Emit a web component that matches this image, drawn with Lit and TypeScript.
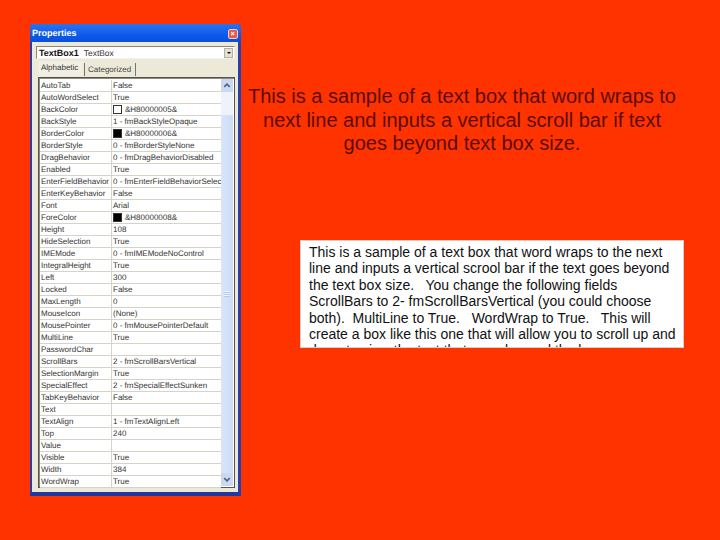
import { LitElement, html, css, svg } from "lit";
import { customElement } from "lit/decorators.js";

type Row = [string, string, string?];
const rows: Row[] = [
  ["AutoTab", "False"],
  ["AutoWordSelect", "True"],
  ["BackColor", "&H80000005&", "#fff"],
  ["BackStyle", "1 - fmBackStyleOpaque"],
  ["BorderColor", "&H80000006&", "#000"],
  ["BorderStyle", "0 - fmBorderStyleNone"],
  ["DragBehavior", "0 - fmDragBehaviorDisabled"],
  ["Enabled", "True"],
  ["EnterFieldBehavior", "0 - fmEnterFieldBehaviorSelec"],
  ["EnterKeyBehavior", "False"],
  ["Font", "Arial"],
  ["ForeColor", "&H80000008&", "#000"],
  ["Height", "108"],
  ["HideSelection", "True"],
  ["IMEMode", "0 - fmIMEModeNoControl"],
  ["IntegralHeight", "True"],
  ["Left", "300"],
  ["Locked", "False"],
  ["MaxLength", "0"],
  ["MouseIcon", "(None)"],
  ["MousePointer", "0 - fmMousePointerDefault"],
  ["MultiLine", "True"],
  ["PasswordChar", ""],
  ["ScrollBars", "2 - fmScrollBarsVertical"],
  ["SelectionMargin", "True"],
  ["SpecialEffect", "2 - fmSpecialEffectSunken"],
  ["TabKeyBehavior", "False"],
  ["Text", ""],
  ["TextAlign", "1 - fmTextAlignLeft"],
  ["Top", "240"],
  ["Value", ""],
  ["Visible", "True"],
  ["Width", "384"],
  ["WordWrap", "True"],
];

@customElement("app-root")
export class AppRoot extends LitElement {
  static styles = css`
    :host {
      display: block;
      width: 720px;
      height: 540px;
      overflow: hidden;
      background: #ff3300;
      font-family: "Liberation Sans", Arial, sans-serif;
    }
    .slide {
      display: flex;
      align-items: flex-start;
      padding: 24px 36px 0 30px;
      gap: 1px;
    }
    .win {
      flex: none;
      width: 211px;
      height: 472px;
      box-sizing: border-box;
      background: #ece9d8;
      border-left: 2px solid #2440ae;
      border-right: 3px solid #2440ae;
      border-bottom: 4px solid #23389f;
      border-radius: 3px 3px 0 0;
      display: flex;
      flex-direction: column;
      font-size: 8px;
      text-rendering: geometricPrecision;
      color: #333;
    }
    .title {
      height: 18px;
      flex: none;
      margin: 0 -3px 0 -2px;
      background: linear-gradient(#2a72f0, #0a58e8 70%, #0b4fd6);
      border-radius: 3px 3px 0 0;
      display: flex;
      align-items: center;
      justify-content: space-between;
      padding: 0 3px 0 2px;
      color: #fff;
      font-weight: 700;
      font-size: 9px;
    }
    .close {
      width: 10px;
      height: 10px;
      border-radius: 2px;
      background: #e0604a;
      border: 1px solid #f3c8bd;
      box-sizing: border-box;
      display: block;
      margin-top: 1px;
    }
    .combo {
      margin: 4px 4px 0;
      height: 11px;
      flex: none;
      background: #fff;
      border: 1px solid #8a8778;
      border-bottom-color: #f4f2e8;
      border-right-color: #f4f2e8;
      display: flex;
      align-items: center;
      padding-left: 2px;
      gap: 5px;
      width: 195px;
      color: #333;
    }
    .combo b { color: #111; font-size: 9px; }
    .combo span { flex: 1; font-size: 8.4px; }
    .drop {
      width: 9px;
      height: 10px;
      margin-right: 1px;
      background: #e4e1d2;
      border: 1px solid #b5b2a2;
      box-sizing: border-box;
      display: flex;
      align-items: center;
      justify-content: center;
    }
    .drop i {
      width: 0;
      height: 0;
      border: 2px solid transparent;
      border-top: 2px solid #000;
      border-bottom: none;
    }
    .tabs {
      display: flex;
      margin: 2px 5px 0 7px;
      height: 15px;
      flex: none;
      align-items: flex-end;
    }
    .tab {
      display: flex;
      align-items: center;
      box-sizing: border-box;
    }
    .tab.active {
      height: 15px;
      padding: 0 0 3px 2px;
      background: #f1efe3;
      width: 44px;
    }
    .tab.other {
      border-right: 1px solid #77756a;
      border-left: 1px solid #77756a;
      margin-left: 1px;
      height: 13px;
      width: 52px;
      padding: 0 0 0 3px;
      color: #444;
    }
    .grid {
      margin: 1px 0 0 6px;
      width: 197px;
      flex: none;
      height: 411px;
      box-sizing: border-box;
      background: #fff;
      border: 1px solid #55534a;
      box-shadow: inset 1px 1px 0 #8c8a7e;
      display: flex;
      padding: 2px 1px 0 1px;
    }
    .rows {
      width: 181px;
      flex: none;
    }
    .row {
      display: grid;
      grid-template-columns: 71px 1fr;
      height: 12px;
      box-sizing: border-box;
      border-bottom: 1px solid #d6d4c8;
      line-height: 11px;
      white-space: nowrap;
    }
    .row > div { overflow: hidden; padding-left: 1px; }
    .row > div + div {
      border-left: 1px solid #d6d4c8;
      padding-left: 1px;
      display: flex;
      align-items: center;
      gap: 3px;
    }
    .swatch {
      width: 9px;
      height: 9px;
      flex: none;
      box-sizing: border-box;
      border: 1px solid #333;
    }
    .sb {
      flex: 1;
      display: flex;
      flex-direction: column;
      background: #eef3fb;
      margin-top: -1px;
      height: 407px;
    }
    .sbtn {
      height: 13px;
      flex: none;
      background: #cad8f4;
      display: block;
      width: 100%;
    }
    .track { height: 23px; flex: none; }
    .thumb {
      flex: 1;
      background: linear-gradient(90deg, #d8e5fb, #cddcf8);
      display: flex;
      align-items: center;
      justify-content: center;
    }
    .grip {
      width: 6px;
      height: 6px;
      background: repeating-linear-gradient(#eef3fd 0 1px, #b4c8ec 1px 2px);
    }
    .main {
      flex: 1;
      display: flex;
      flex-direction: column;
      align-items: flex-start;
    }
    h1 {
      margin: 61px 0 0;
      width: 440px;
      text-align: center;
      font-weight: 400;
      font-size: 20px;
      line-height: 23.7px;
      color: #5c0c02;
    }
    .box {
      margin: 83.9px 0 0 58px;
      width: 384px;
      height: 108px;
      flex: none;
      box-sizing: border-box;
      background: #fff;
      border: 1px solid #d8cfc8;
      overflow: hidden;
      padding: 3px 6px 0 8px;
      font-size: 14px;
      line-height: 16.4px;
      color: #111;
      white-space: pre-wrap;
    }
  `;

  private arrow(d: string) {
    return svg`<svg class="sbtn" viewBox="0 0 13 13"><path d=${d} fill="none" stroke="#4d6185" stroke-width="1.6"/></svg>`;
  }

  render() {
    return html`<div class="slide">
      <section class="win">
        <div class="title">
          <span>Properties</span>
          <svg class="close" viewBox="0 0 10 10"><path d="M2.5 2.5l4 4M6.5 2.5l-4 4" stroke="#fff" stroke-width="1.3"/></svg>
        </div>
        <div class="combo"><b>TextBox1</b><span>TextBox</span><div class="drop"><i></i></div></div>
        <div class="tabs">
          <div class="tab active">Alphabetic</div>
          <div class="tab other">Categorized</div>
        </div>
        <div class="grid">
          <div class="rows">
            ${rows.map(
              ([k, v, c]) => html`<div class="row">
                <div>${k}</div>
                <div>${c ? html`<i class="swatch" style="background:${c}"></i>` : ""}${v}</div>
              </div>`
            )}
          </div>
          <div class="sb">
            ${this.arrow("M3.5 8l3-3 3 3")}
            <div class="track"></div>
            <div class="thumb"><div class="grip"></div></div>
            ${this.arrow("M3.5 5l3 3 3-3")}
          </div>
        </div>
      </section>
      <div class="main">
        <h1>This is a sample of a text box that word wraps to<br />next line and inputs a vertical scroll bar if text<br />goes beyond text box size.</h1>
        <div class="box">This is a sample of a text box that word wraps to the next line and inputs a vertical scrool bar if the text goes beyond the text box size.   You change the following fields ScrollBars to 2- fmScrollBarsVertical (you could choose both).  MultiLine to True.   WordWrap to True.   This will create a box like this one that will allow you to scroll up and down to view the text that goes beyond the box.</div>
      </div>
    </div>`;
  }
}
